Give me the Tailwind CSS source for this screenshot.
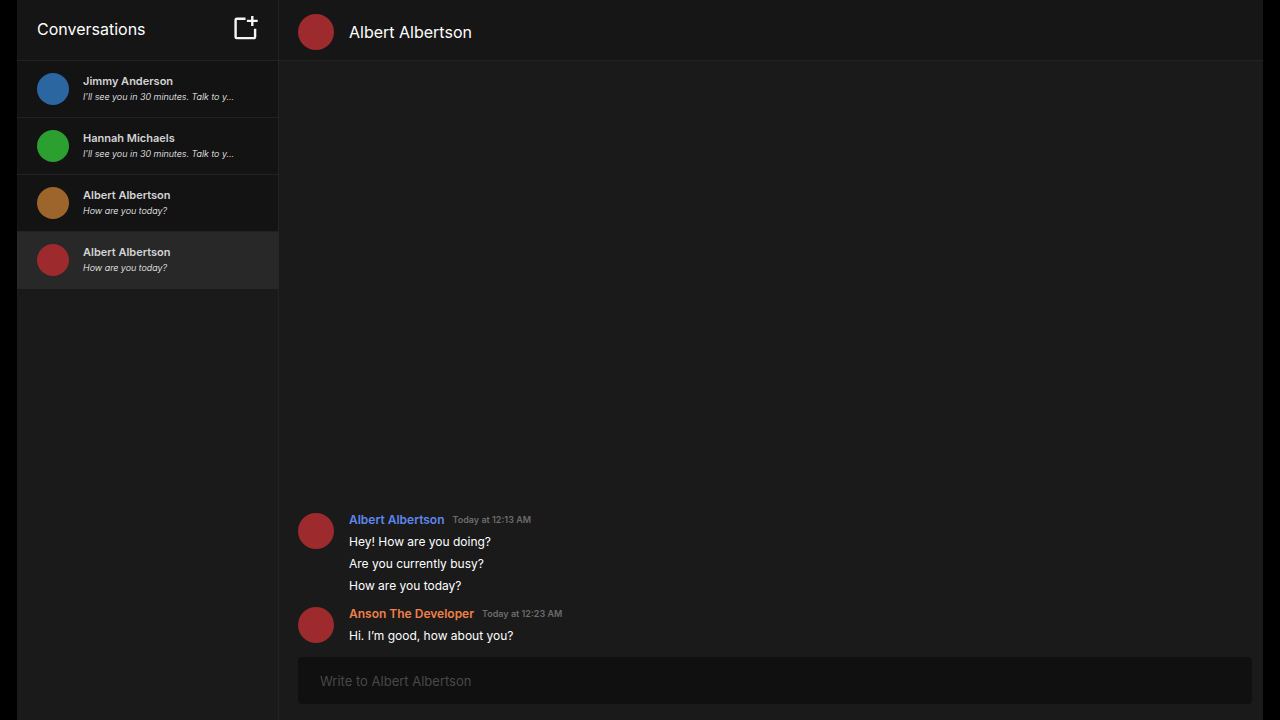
<!DOCTYPE html>
<html lang="en">
<head>
    <meta charset="UTF-8">
    <meta name="viewport" content="width=device-width, initial-scale=1.0">
    <title>Conversations</title>
    <script src="https://cdn.jsdelivr.net/npm/@tailwindcss/browser@4"></script>
</head>
<body class="bg-black px-[17px] font-['Inter',sans-serif] text-white">
    <div class="flex h-screen bg-[#1a1a1a]">

        <!-- Sidebar -->
        <aside class="flex w-[262px] shrink-0 flex-col border-r border-[#222222]">
            <header class="flex h-[61px] shrink-0 items-center justify-between border-b border-[#222222] bg-[#151515] px-5 pb-1">
                <h1 class="pt-0.5 text-base">Conversations</h1>
                <button type="button" aria-label="New conversation">
                    <svg class="size-6" viewBox="0 0 24 24" fill="none" stroke="#f5f5f5" stroke-width="2.4">
                        <path d="M11.5 2.8H2.6a1 1 0 0 0-1 1v17.3a1 1 0 0 0 1 1h17.5a1 1 0 0 0 1-1v-8.4" />
                        <path d="M18.3 0v10M12.9 4.9h10.8" />
                    </svg>
                </button>
            </header>

            <nav>
                <a href="#" class="flex items-center gap-[14px] border-b border-[#222222] bg-[#131313] px-5 py-3">
                    <span class="size-8 shrink-0 rounded-full bg-[#2b66a0]"></span>
                    <span class="flex min-w-0 flex-col">
                        <span class="text-[11px] leading-4 font-semibold text-[#d4d4d4]">Jimmy Anderson</span>
                        <span class="text-[9px] leading-4 font-light text-white italic">I’ll see you in 30 minutes. Talk to y...</span>
                    </span>
                </a>
                <a href="#" class="flex items-center gap-[14px] border-b border-[#222222] bg-[#131313] px-5 py-3">
                    <span class="size-8 shrink-0 rounded-full bg-[#2b9f2f]"></span>
                    <span class="flex min-w-0 flex-col">
                        <span class="text-[11px] leading-4 font-semibold text-[#d4d4d4]">Hannah Michaels</span>
                        <span class="text-[9px] leading-4 font-light text-white italic">I’ll see you in 30 minutes. Talk to y...</span>
                    </span>
                </a>
                <a href="#" class="flex items-center gap-[14px] border-b border-[#222222] bg-[#131313] px-5 py-3">
                    <span class="size-8 shrink-0 rounded-full bg-[#9d652b]"></span>
                    <span class="flex min-w-0 flex-col">
                        <span class="text-[11px] leading-4 font-semibold text-[#d4d4d4]">Albert Albertson</span>
                        <span class="text-[9px] leading-4 font-light text-white italic">How are you today?</span>
                    </span>
                </a>
                <a href="#" class="-mr-px flex items-center gap-[14px] border-b border-[#282828] bg-[#282828] px-5 py-3">
                    <span class="size-8 shrink-0 rounded-full bg-[#9d2a2c]"></span>
                    <span class="flex min-w-0 flex-col">
                        <span class="text-[11px] leading-4 font-semibold text-[#d4d4d4]">Albert Albertson</span>
                        <span class="text-[9px] leading-4 font-light text-white italic">How are you today?</span>
                    </span>
                </a>
            </nav>
        </aside>

        <!-- Chat -->
        <main class="flex min-w-0 flex-1 flex-col">
            <header class="flex h-[61px] shrink-0 items-center gap-[15px] border-b border-[#222222] bg-[#161616] px-[19px] pt-1">
                <span class="size-9 rounded-full bg-[#9d2a2c]"></span>
                <h2 class="text-base">Albert Albertson</h2>
            </header>

            <div class="flex flex-1 flex-col justify-end gap-1.5 px-[19px] pb-[10px]">
                <article class="flex gap-[15px]">
                    <span class="mt-1 size-9 shrink-0 rounded-full bg-[#9d2a2c]"></span>
                    <div class="text-xs leading-[22px]">
                        <div class="flex items-center gap-2">
                            <span class="font-semibold text-[#5e86ee]">Albert Albertson</span>
                            <time class="text-[9px] font-semibold text-[#6c6c6c]">Today at 12:13 AM</time>
                        </div>
                        <p>Hey! How are you doing?</p>
                        <p>Are you currently busy?</p>
                        <p>How are you today?</p>
                    </div>
                </article>
                <article class="flex gap-[15px]">
                    <span class="mt-1 size-9 shrink-0 rounded-full bg-[#9d2a2c]"></span>
                    <div class="text-xs leading-[22px]">
                        <div class="flex items-center gap-2">
                            <span class="font-semibold text-[#f08048]">Anson The Developer</span>
                            <time class="text-[9px] font-semibold text-[#6c6c6c]">Today at 12:23 AM</time>
                        </div>
                        <p>Hi. I’m good, how about you?</p>
                    </div>
                </article>
            </div>

            <form class="pr-[11px] pb-4 pl-[19px]">
                <input
                    type="text"
                    id="message"
                    aria-label="Message"
                    placeholder="Write to Albert Albertson"
                    class="block h-[47px] w-full rounded bg-[#101010] px-[22px] text-[13px] text-white outline-none placeholder:text-[#484848]"
                >
            </form>
        </main>
    </div>
</body>
</html>
